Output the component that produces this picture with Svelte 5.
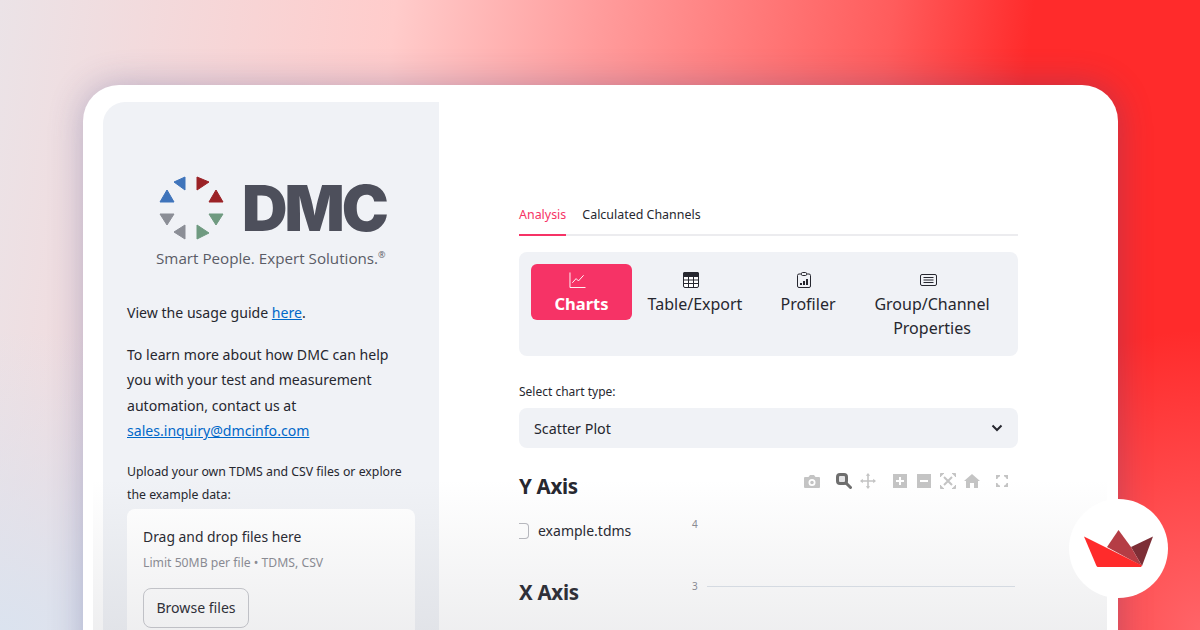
<script>
	const tabs = ['Analysis', 'Calculated Channels'];
	const wedges = [
		['19,10 30,5 30,18', '#3f74bb'],
		['42,5 54,10 42,18', '#9b2226'],
		['61,18 68,30 54,30', '#9b2226'],
		['54,42 68,42 61,53', '#6f9a80'],
		['42,53 54,61 42,67', '#6f9a80'],
		['30,53 30,67 19,60', '#8b8e96'],
		['5,42 19,42 12,53', '#8b8e96'],
		['12,18 19,30 5,30', '#3f74bb']
	];
</script>

<div class="page">
	<div class="card">
		<aside class="sidebar">
			<div class="logo">
				<div class="logo-row">
					<svg width="72" height="72" viewBox="0 0 72 72" aria-hidden="true">
						{#each wedges as [points, fill]}
							<polygon {points} {fill} stroke={fill} stroke-width="1" stroke-linejoin="round" />
						{/each}
					</svg>
					<span class="dmc">DMC</span>
				</div>
				<div class="tagline">Smart People. Expert Solutions.<sup>®</sup></div>
			</div>
			<p class="guide">View the usage guide <a href="#here">here</a>.</p>
			<p class="contact">
				To learn more about how DMC can help<br />
				you with your test and measurement<br />
				automation, contact us at<br />
				<a href="#mail">sales.inquiry@dmcinfo.com</a>
			</p>
			<p class="upload-label">
				Upload your own TDMS and CSV files or explore<br />
				the example data:
			</p>
			<div class="dropzone">
				<div class="drop-title">Drag and drop files here</div>
				<div class="drop-limit">Limit 50MB per file • TDMS, CSV</div>
				<button type="button" class="browse">Browse files</button>
			</div>
		</aside>

		<main class="main">
			<div class="tabs">
				{#each tabs as tab, i}
					<span class="tab" class:active={i === 0}>{tab}</span>
				{/each}
			</div>

			<nav class="nav">
				<div class="nav-item charts">
					<svg width="17" height="17" viewBox="0 0 17 17" fill="none" stroke="currentColor" stroke-width="1">
						<path d="M.5 .5V16.500H17" />
						<path d="M3 11.500L7 7l2.500 2.500L15 3.500" />
					</svg>
					<span>Charts</span>
				</div>
				<div class="nav-item table">
					<svg width="16" height="16" viewBox="0 0 16 16">
						<rect x=".5" y=".5" width="15" height="15" rx="1.500" fill="#fff" stroke="#26272f" />
						<path d="M0 1.500A1.500 1.500 0 0 1 1.500 0h13A1.500 1.500 0 0 1 16 1.500V5H0z" fill="#26272f" />
						<path d="M0 8h16M0 11.500h16M5.500 5v11M10.500 5v11" stroke="#26272f" fill="none" />
					</svg>
					<span>Table/Export</span>
				</div>
				<div class="nav-item profiler">
					<svg width="16" height="16" viewBox="0 0 16 16" fill="none" stroke="#26272f">
						<rect x="1.500" y="2" width="13" height="13.500" rx="1.500" />
						<rect x="5.500" y=".5" width="5" height="3" rx="1" fill="#f0f2f6" />
						<path d="M5 13v-2M8 13V9M11 13V7" stroke-width="2" />
					</svg>
					<span>Profiler</span>
				</div>
				<div class="nav-item group">
					<svg width="17" height="16" viewBox="0 0 17 16" fill="none" stroke="#26272f">
						<rect x=".5" y="2.500" width="16" height="11" rx="1.500" />
						<path d="M3.500 5.500h10M3.500 8h10M3.500 10.500h10" />
					</svg>
					<span>Group/Channel Properties</span>
				</div>
			</nav>

			<label class="select-label" for="chart-type">Select chart type:</label>
			<div class="select" id="chart-type">
				<span>Scatter Plot</span>
				<svg width="12" height="8" viewBox="0 0 12 8" fill="none" stroke="#26272f" stroke-width="2">
					<path d="M1.500 1.500L6 6l4.500-4.500" />
				</svg>
			</div>

			<div class="split">
				<div class="controls">
					<h2>Y Axis</h2>
					<div class="check"><span class="box"></span>example.tdms</div>
					<h2 class="x-axis">X Axis</h2>
				</div>
				<div class="plot">
					<div class="modebar">
						<svg class="mb" width="16" height="13" viewBox="0 0 16 13">
							<path fill-rule="evenodd" d="M1 2h3.500L6 0h4l1.500 2H15a1 1 0 0 1 1 1v9a1 1 0 0 1-1 1H1a1 1 0 0 1-1-1V3a1 1 0 0 1 1-1zm7 2a3.500 3.500 0 1 0 0 7 3.500 3.500 0 0 0 0-7zm0 1.700a1.800 1.800 0 1 1 0 3.600 1.800 1.800 0 0 1 0-3.600z" />
						</svg>
						<svg class="mb zoom" width="16" height="16" viewBox="0 0 16 16">
							<rect x="1.500" y="1.500" width="9" height="9" rx="2.500" fill="#e4e4e6" stroke="#6e6e6e" stroke-width="3" />
							<path d="M10 10l4.500 4.500" stroke="#6e6e6e" stroke-width="3" stroke-linecap="round" />
						</svg>
						<svg class="mb pan" width="16" height="16" viewBox="0 0 16 16">
							<path d="M8 0l2.200 2.800H8.800v4.400h4.400V5.800L16 8l-2.800 2.200V8.800H8.800v4.400h1.400L8 16l-2.200-2.800h1.400V8.800H2.800v1.400L0 8l2.800-2.200v1.400h4.400V2.800H5.800z" />
						</svg>
						<svg class="mb plus" width="14" height="14" viewBox="0 0 14 14">
							<path fill-rule="evenodd" d="M0 0h14v14H0zM6 3v3H3v2h3v3h2V8h3V6H8V3z" />
						</svg>
						<svg class="mb minus" width="14" height="14" viewBox="0 0 14 14">
							<path fill-rule="evenodd" d="M0 0h14v14H0zM3 6v2h8V6z" />
						</svg>
						<svg class="mb auto" width="16" height="16" viewBox="0 0 16 16" fill="none" stroke="#c4c4c4">
							<path d="M.5 4V.5H4M12 .5h3.500V4M15.500 12v3.500H12M4 15.500H.5V12" />
							<path d="M4 4l8 8M12 4l-8 8" stroke-width="2" />
						</svg>
						<svg class="mb home" width="16" height="14" viewBox="0 0 16 14">
							<path d="M8 0l8 7h-2v7h-4V9H6v5H2V7H0z" />
						</svg>
						<svg class="mb full" width="12" height="12" viewBox="0 0 12 12" fill="none" stroke="#c4c4c4" stroke-width="1.500">
							<path d="M.75 4V.75H4M8 .75h3.250V4M11.250 8v3.250H8M4 11.250H.75V8" />
						</svg>
					</div>
					<div class="tick first"><span>4</span></div>
					<div class="tick"><span>3</span><i></i></div>
				</div>
			</div>
		</main>
	</div>
	<div class="fade"></div>
	<div class="badge">
		<svg width="70" height="38" viewBox="0 0 70 38">
			<polygon points="47,17 69,6.500 58,36" fill="#7d2e36" />
			<polygon points="23,17 34.500,0 47,17 58,36" fill="#b53d45" />
			<path d="M0 6.500L58 35.500 57 37H13.500L12.500 36z" fill="#ff2b2b" />
		</svg>
	</div>
</div>

<style>
	:global(body) {
		margin: 0;
		font-family: 'Noto Sans', sans-serif;
		color: #26272f;
	}

	.page {
		position: relative;
		width: 1200px;
		height: 630px;
		padding-top: 85px;
		box-sizing: border-box;
		overflow: hidden;
		background:
			radial-gradient(ellipse 520px 300px at 0 630px, #dbe3ef 0%, rgba(219, 227, 239, 0) 100%),
			radial-gradient(ellipse 260px 300px at 1200px 630px, #ff6468 0%, rgba(255, 100, 104, 0) 100%),
			linear-gradient(97deg, #ebe3e7 0%, #ffcccb 31%, #ff9c9c 47%, #ff5c5c 70%, #ff2b2b 81%, #ff2b2b 100%);
	}

	.card {
		display: flex;
		width: 1035px;
		height: 600px;
		margin-left: 83px;
		padding: 17px 20px 0;
		box-sizing: border-box;
		background: #fff;
		border-radius: 36px 36px 0 0;
		box-shadow: 0 0 34px rgba(60, 70, 140, 0.32);
	}

	.sidebar {
		flex: 0 0 336px;
		box-sizing: border-box;
		padding: 70px 24px 0;
		background: #f0f2f6;
		border-top-left-radius: 22px;
		font-size: 14.100px;
		line-height: 25.400px;
	}

	.logo {
		padding-left: 28px;
	}

	.logo-row {
		display: flex;
		align-items: center;
		height: 72px;
	}

	.dmc {
		margin-left: 15px;
		font-family: Inter, sans-serif;
		font-size: 63px;
		font-weight: 900;
		line-height: 72px;
		letter-spacing: -3px;
		color: #4d4f5b;
	}

	.tagline {
		margin: 4px 0 0 1px;
		font-family: 'Open Sans', sans-serif;
		font-size: 15.200px;
		line-height: 20px;
		color: #5a5c66;
		white-space: nowrap;
	}

	.tagline sup {
		font-size: 9px;
		line-height: 0;
	}

	p {
		margin: 0;
	}

	.guide {
		margin-top: 32px;
	}

	.contact {
		margin-top: 16.600px;
	}

	a {
		color: #0068c9;
	}

	.upload-label {
		margin-top: 16px;
		font-size: 12.300px;
		line-height: 23px;
	}

	.dropzone {
		margin-top: 3px;
		padding: 16px;
		background: #fff;
		border-radius: 8px;
		height: 140px;
		box-sizing: border-box;
	}

	.drop-title {
		font-size: 13.900px;
		line-height: 24px;
	}

	.drop-limit {
		margin-top: 3px;
		font-size: 12.200px;
		line-height: 22px;
		color: #8a8b93;
	}

	.browse {
		display: block;
		width: 106px;
		height: 40px;
		margin-top: 14px;
		padding: 0;
		font: inherit;
		color: #26272f;
		background: #fff;
		border: 1px solid #c8c9ce;
		border-radius: 8px;
	}

	.main {
		flex: 0 0 499px;
		margin-left: 80px;
		padding-top: 99px;
	}

	.tabs {
		display: flex;
		gap: 16px;
		height: 35px;
		box-sizing: border-box;
		border-bottom: 2px solid #ececef;
	}

	.tab {
		height: 35px;
		box-sizing: border-box;
		font-size: 12.450px;
		line-height: 27px;
		border-bottom: 2px solid transparent;
	}

	.tab.active {
		color: #f63366;
		border-bottom-color: #f63366;
	}

	.nav {
		display: flex;
		align-items: flex-start;
		height: 104px;
		margin-top: 16px;
		padding: 12px;
		box-sizing: border-box;
		background: #f0f2f6;
		border-radius: 8px;
	}

	.nav-item {
		display: flex;
		flex-direction: column;
		align-items: center;
		box-sizing: border-box;
		padding-top: 8px;
		font-size: 16px;
		line-height: 24px;
		text-align: center;
	}

	.nav-item svg {
		height: 16px;
		margin: 0 8px 4px 0;
	}

	.charts {
		width: 101px;
		height: 56px;
		color: #fff;
		font-size: 16.500px;
		font-weight: 700;
		background: #f63366;
		border-radius: 6px;
	}

	.table {
		width: 126px;
	}

	.profiler {
		width: 100px;
	}

	.group {
		width: 148px;
	}

	.select-label {
		display: block;
		margin-top: 25px;
		font-size: 12px;
		line-height: 22px;
	}

	.select {
		display: flex;
		align-items: center;
		justify-content: space-between;
		height: 40px;
		margin-top: 5px;
		padding: 0 15px;
		font-size: 14.300px;
		background: #f0f2f6;
		border-radius: 8px;
	}

	.split {
		display: flex;
		margin-top: 20px;
	}

	.controls {
		flex: 0 0 171px;
	}

	h2 {
		margin: 0;
		font-size: 20.500px;
		line-height: 36px;
		font-weight: 700;
		letter-spacing: -0.300px;
	}

	.check {
		display: flex;
		align-items: center;
		margin-top: 15px;
		font-size: 14px;
		line-height: 24px;
	}

	.box {
		width: 10px;
		height: 16px;
		margin-right: 9px;
		box-sizing: border-box;
		border: 1px solid #b8b9bf;
		border-left: none;
		border-radius: 0 4px 4px 0;
	}

	.x-axis {
		margin-top: 31px;
	}

	.plot {
		flex: 1;
		min-width: 0;
	}

	.modebar {
		display: flex;
		align-items: center;
		height: 26px;
	}

	.mb {
		flex: none;
		fill: #c4c4c4;
	}

	.modebar :first-child {
		margin-left: 114px;
	}

	.zoom {
		margin-left: 16px;
	}

	.pan {
		margin-left: 8px;
	}

	.plus {
		margin-left: 17px;
	}

	.minus {
		margin-left: 10px;
	}

	.auto {
		margin-left: 9px;
	}

	.home {
		margin-left: 8px;
	}

	.full {
		margin-left: 16px;
	}

	.tick {
		display: flex;
		align-items: center;
		height: 16px;
		margin-top: 46px;
		font-size: 10px;
		color: #8a8b93;
	}

	.modebar + .tick {
		margin-top: 22px;
	}

	.tick span {
		width: 15px;
		margin-left: 2px;
	}

	.tick i {
		flex: 0 0 308px;
		height: 1px;
		background: #dde3ea;
	}

	.fade {
		position: absolute;
		left: 93px;
		right: 93px;
		top: 480px;
		bottom: 0;
		pointer-events: none;
		background: linear-gradient(180deg, rgba(128, 130, 140, 0), rgba(128, 130, 140, 0.13));
	}

	.badge {
		position: absolute;
		left: 1069px;
		top: 499px;
		display: flex;
		align-items: center;
		justify-content: center;
		width: 99px;
		height: 99px;
		background: #fff;
		border-radius: 50%;
	}
</style>
